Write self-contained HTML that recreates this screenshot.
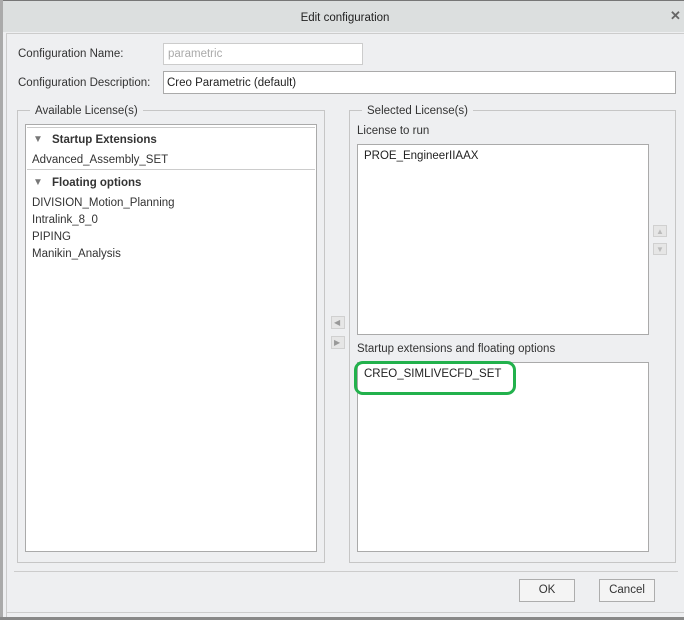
<!DOCTYPE html>
<html><head><style>
*{box-sizing:border-box;margin:0;padding:0}
body{width:684px;height:620px;background:#eeeff1;font-family:"Liberation Sans",sans-serif;font-size:11.5px;color:#333;position:relative;overflow:hidden}
.a{position:absolute}
.t{position:absolute;white-space:nowrap;line-height:14px}
.box{position:absolute;background:#fff;border:1px solid #aaa}
.grp{position:absolute;border:1px solid #c6c6c6}
.btn{position:absolute;border:1px solid #adadad;background:#f4f4f4;text-align:center;line-height:20px}
.sb{position:absolute;width:14px;height:12px;border:1px solid #d0d0d0;background:#e6e6e6}
</style></head><body>
<div class="a" style="left:0;top:0;width:684px;height:1px;background:#777"></div>
<div class="a" style="left:0;top:0;width:3px;height:620px;background:#aaa"></div>
<div class="a" style="left:3px;top:1px;width:681px;height:31px;background:#dcdfdf"></div>
<div class="t" style="left:0;width:690px;text-align:center;top:11px;color:#222">Edit configuration</div>
<div class="t" style="left:670px;top:9px;font-weight:bold;color:#666;font-size:13px">✕</div>
<div class="a" style="left:6px;top:33px;width:678px;height:1px;background:#ccc"></div>
<div class="a" style="left:6px;top:33px;width:1px;height:587px;background:#ccc"></div>

<div class="t" style="left:18px;top:47px">Configuration Name:</div>
<div class="a" style="left:163px;top:43px;width:200px;height:22px;border:1px solid #ccc;background:#fff"></div>
<div class="t" style="left:168px;top:47px;color:#aaa">parametric</div>
<div class="t" style="left:18px;top:76px">Configuration Description:</div>
<div class="a" style="left:163px;top:71px;width:513px;height:23px;border:1px solid #aaa;background:#fff"></div>
<div class="t" style="left:167px;top:76px;color:#222">Creo Parametric (default)</div>

<div class="grp" style="left:17px;top:110px;width:308px;height:453px"></div>
<div class="t" style="left:30px;top:104px;background:#eeeff1;padding:0 5px">Available License(s)</div>
<div class="box" style="left:25px;top:124px;width:292px;height:428px"></div>
<div class="a" style="left:27px;top:127px;width:288px;height:1px;background:#ccc"></div>
<div class="t" style="left:33px;top:133px;color:#777;font-size:10px">▼</div>
<div class="t" style="left:52px;top:133px;font-weight:bold;color:#333">Startup Extensions</div>
<div class="t" style="left:32px;top:153px">Advanced_Assembly_SET</div>
<div class="a" style="left:27px;top:169px;width:288px;height:1px;background:#ccc"></div>
<div class="t" style="left:33px;top:176px;color:#777;font-size:10px">▼</div>
<div class="t" style="left:52px;top:176px;font-weight:bold;color:#333">Floating options</div>
<div class="t" style="left:32px;top:196px">DIVISION_Motion_Planning</div>
<div class="t" style="left:32px;top:213px">Intralink_8_0</div>
<div class="t" style="left:32px;top:230px">PIPING</div>
<div class="t" style="left:32px;top:247px">Manikin_Analysis</div>

<div class="sb" style="left:331px;top:316px;height:13px"></div><div class="t" style="left:334px;top:316px;font-size:8px;color:#999">◀</div>
<div class="sb" style="left:331px;top:336px;height:13px"></div><div class="t" style="left:334px;top:336px;font-size:8px;color:#999">▶</div>

<div class="grp" style="left:349px;top:110px;width:327px;height:453px"></div>
<div class="t" style="left:362px;top:104px;background:#eeeff1;padding:0 5px">Selected License(s)</div>
<div class="t" style="left:357px;top:124px">License to run</div>
<div class="box" style="left:357px;top:144px;width:292px;height:191px"></div>
<div class="t" style="left:364px;top:149px;color:#222">PROE_EngineerIIAAX</div>
<div class="sb" style="left:653px;top:225px"></div><div class="t" style="left:656px;top:225px;font-size:8px;color:#bbb">▲</div>
<div class="sb" style="left:653px;top:243px"></div><div class="t" style="left:656px;top:243px;font-size:8px;color:#bbb">▼</div>
<div class="t" style="left:357px;top:342px">Startup extensions and floating options</div>
<div class="box" style="left:357px;top:362px;width:292px;height:190px"></div>
<div class="t" style="left:364px;top:367px;color:#222">CREO_SIMLIVECFD_SET</div>
<div class="a" style="left:354px;top:361px;width:162px;height:34px;border:3px solid #22b14c;border-radius:9px"></div>

<div class="a" style="left:14px;top:571px;width:664px;height:1px;background:#ccc"></div>
<div class="btn" style="left:519px;top:579px;width:56px;height:23px">OK</div>
<div class="btn" style="left:599px;top:579px;width:56px;height:23px">Cancel</div>
<div class="a" style="left:6px;top:612px;width:678px;height:1px;background:#ccc"></div>
<div class="a" style="left:0;top:617px;width:684px;height:3px;background:#888"></div>
</body></html>
